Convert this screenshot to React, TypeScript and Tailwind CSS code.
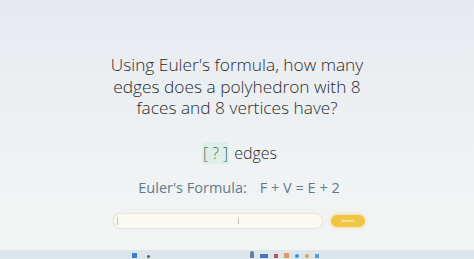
export default function App() {
  return (
    <div
      className="relative flex h-[259px] w-[474px] flex-col overflow-hidden bg-gradient-to-b from-[#e6eaef] via-[#eef1f3] to-[#f3f5f4] text-[#3b3d40]"
      style={{ fontFamily: '"Open Sans", "Noto Sans", sans-serif' }}
    >
      {/* question */}
      <div className="mt-[54px] flex flex-col items-center text-[17.3px] font-light leading-[21.5px] text-[#2a2c2f]">
        <p>Using Euler's formula, how many</p>
        <p>edges does a polyhedron with 8</p>
        <p>faces and 8 vertices have?</p>
      </div>

      {/* answer */}
      <div className="mt-[23px] ml-[5px] flex items-center justify-center text-[16px] font-light leading-[22px] text-[#2a2c2f]">
        <span className="bg-[#dcefe9] px-[1px] text-[#4d6a62]">[ ? ]</span>
        <span className="ml-[5px]">edges</span>
      </div>

      {/* formula */}
      <div className="mt-[14px] ml-[4px] flex justify-center text-[14.5px] leading-[20px] text-[#5d7b8c]">
        <span>Euler's Formula:</span>
        <span className="ml-[13px]">F + V = E + 2</span>
      </div>

      {/* input row */}
      <div className="mt-[15px] ml-[113px] flex items-center gap-[8px]">
        <div className="flex h-[16px] w-[210px] items-center rounded-full border border-[#ece6da] bg-[#fbf9f3] shadow-[0_0_2px_rgba(0,0,0,0.05)]">
          <span className="ml-[3px] h-[8px] w-[1px] bg-[#c9c4b8]" />
          <span className="ml-[120px] h-[6px] w-[1px] bg-[#c9c4b8]" />
        </div>
        <div className="flex h-[12px] w-[34px] items-center justify-center rounded-full bg-[#f2c443] text-[4px] font-semibold text-[#fff6dc] shadow-[0_0_4px_rgba(240,190,60,0.6)]">
          Submit
        </div>
      </div>

      {/* taskbar */}
      <div className="absolute bottom-0 left-0 flex h-[9px] w-full items-end bg-[#dde6ea]">
        <div className="ml-[132px] flex items-end gap-[10px] pb-[1px]">
          <span className="h-[5px] w-[5px] bg-[#3b7fd1]" />
          <span className="h-[3px] w-[3px] rounded-full bg-[#5a6470]" />
        </div>
        <div className="ml-[100px] flex items-end gap-[6px] pb-[1px]">
          <span className="h-[7px] w-[4px] rounded-t-full bg-[#6a7f9e]" />
          <span className="h-[4px] w-[8px] bg-[#4a74b5]" />
          <span className="h-[4px] w-[4px] bg-[#b5584d]" />
          <span className="h-[5px] w-[5px] bg-[#d99a6a]" />
          <span className="h-[4px] w-[4px] rounded-full bg-[#2f9bd0]" />
          <span className="h-[4px] w-[4px] rounded-full bg-[#e0a23a]" />
          <span className="h-[4px] w-[4px] bg-[#5aa0d8]" />
        </div>
      </div>
    </div>
  );
}
